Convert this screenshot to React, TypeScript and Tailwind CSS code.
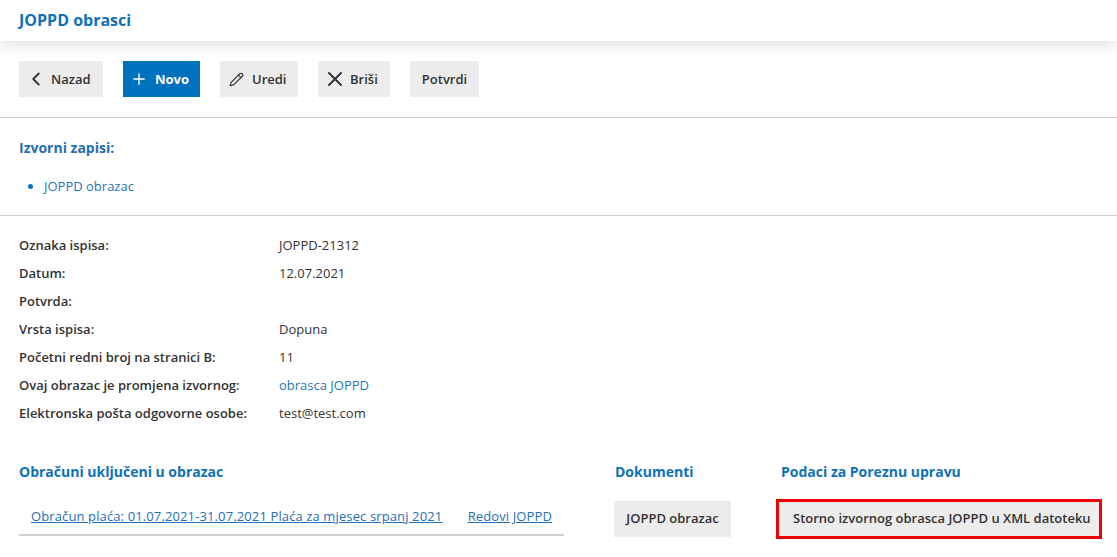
import React from 'react';
import { ChevronLeft, Plus, Pencil, X } from 'lucide-react';

const rows: { label: string; value: string; link?: boolean }[] = [
  { label: 'Oznaka ispisa:', value: 'JOPPD-21312' },
  { label: 'Datum:', value: '12.07.2021' },
  { label: 'Potvrda:', value: '' },
  { label: 'Vrsta ispisa:', value: 'Dopuna' },
  { label: 'Početni redni broj na stranici B:', value: '11' },
  { label: 'Ovaj obrazac je promjena izvornog:', value: 'obrasca JOPPD', link: true },
  { label: 'Elektronska pošta odgovorne osobe:', value: 'test@test.com' },
];

const btn = 'h-9 shrink-0 flex items-center bg-[#ececec] text-[13px] font-semibold text-[#333]';

export default function App() {
  return (
    <div className="w-[1117px] h-[557px] overflow-hidden bg-white font-['Open_Sans',sans-serif] text-[13px] text-[#333]">
      <header className="h-[41px] flex items-center px-[19px] pb-[2px] bg-white shadow-[0_4px_16px_rgba(0,0,0,0.12)]">
        <h1 className="text-[16px] font-bold text-[#0f71b8]">JOPPD obrasci</h1>
      </header>

      <div className="h-[77px] flex items-center gap-5 px-[19px] border-b border-[#d0d0d0]">
        <button className={`${btn} w-[84px] pl-[6px]`}>
          <ChevronLeft size={22} strokeWidth={2} className="mr-[4px]" />
          <span className="pt-[1px]">Nazad</span>
        </button>
        <button className="h-9 w-[77px] flex items-center pl-[7px] bg-[#0071bc] text-[13px] font-bold text-white">
          <Plus size={18} strokeWidth={1.8} className="mr-[7px]" />
          <span className="pt-[1px]">Novo</span>
        </button>
        <button className={`${btn} w-[78px] pl-[9px]`}>
          <Pencil size={15} strokeWidth={1.8} className="mr-[8px]" />
          <span className="pt-[1px]">Uredi</span>
        </button>
        <button className={`${btn} w-[72px] pl-[5px]`}>
          <X size={24} strokeWidth={2} className="mr-[3px]" />
          <span className="pt-[1px]">Briši</span>
        </button>
        <button className={`${btn} w-[69px] justify-center`}>
          <span className="pt-[1px]">Potvrdi</span>
        </button>
      </div>

      <section className="h-[98px] border-b border-[#d0d0d0] px-[19px] pt-[20px]">
        <h2 className="text-[14px] leading-[20px] font-bold text-[#1f6fb5]">Izvorni zapisi:</h2>
        <ul className="mt-[18px] list-disc pl-[25px] marker:text-[#0f71b8]">
          <li className="leading-[20px] text-[#1f77b8]">JOPPD obrazac</li>
        </ul>
      </section>

      <section className="px-[19px] pt-[16px]">
        {rows.map(r => (
          <div key={r.label} className="flex h-[28px] items-center">
            <span className="w-[260px] font-semibold text-[#333]">{r.label}</span>
            <span className={r.link ? 'text-[#1f77b8]' : 'text-[#333]'}>{r.value}</span>
          </div>
        ))}
      </section>

      <section className="flex px-[19px] pt-[34px]">
        <div className="w-[545px] shrink-0">
          <h2 className="text-[14px] leading-[20px] font-bold text-[#0f71b8]">Obračuni uključeni u obrazac</h2>
          <div className="mt-[17px] h-[37px] flex items-center justify-between px-[12px] border-b-2 border-[#cfcfcf] text-[#1f6fb5] tracking-[0.12px] underline">
            <a>Obračun plaća: 01.07.2021-31.07.2021 Plaća za mjesec srpanj 2021</a>
            <a>Redovi JOPPD</a>
          </div>
        </div>
        <div className="ml-[50px] w-[117px] shrink-0">
          <h2 className="text-[14px] leading-[20px] font-bold text-[#0f71b8] pl-[1px]">Dokumenti</h2>
          <button className={`${btn} mt-[19px] w-[117px] justify-center`}>JOPPD obrazac</button>
        </div>
        <div className="ml-[45px] shrink-0">
          <h2 className="text-[14px] leading-[20px] font-bold text-[#0f71b8] pl-[5px]">Podaci za Poreznu upravu</h2>
          <button className={`${btn} mt-[17px] h-[40px] w-[326px] pl-[14px] border-[3px] border-[#f00000]`}>
            Storno izvornog obrasca JOPPD u XML datoteku
          </button>
        </div>
      </section>
    </div>
  );
}
